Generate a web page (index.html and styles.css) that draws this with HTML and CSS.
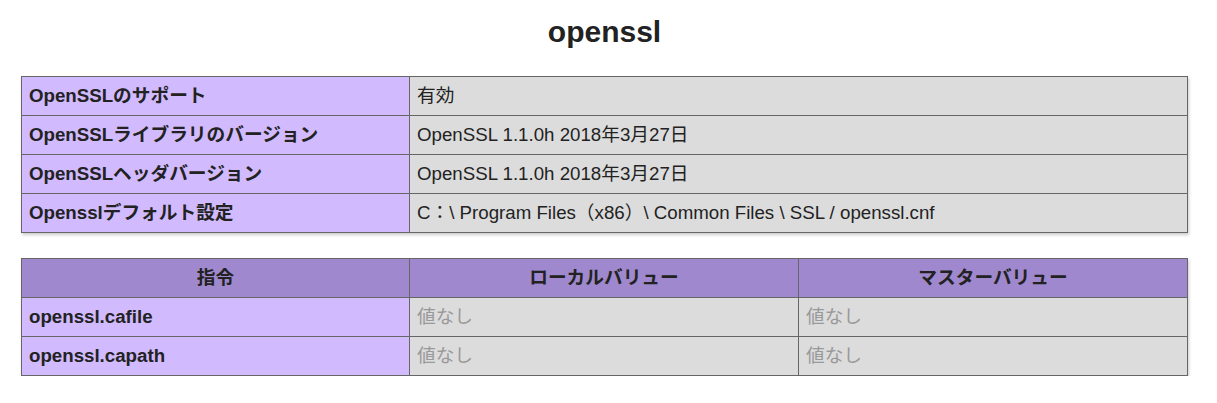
FILE: index.html
```html
<!DOCTYPE html>
<html lang="ja">
<head>
<meta charset="utf-8">
<title>openssl</title>
<link rel="stylesheet" href="styles.css">
</head>
<body>
<div class="page">
  <h1 class="title">openssl</h1>
  <table class="info">
    <colgroup><col class="c-key"><col></colgroup>
    <tr><td class="e">OpenSSLのサポート</td><td class="v">有効</td></tr>
    <tr><td class="e">OpenSSLライブラリのバージョン</td><td class="v">OpenSSL 1.1.0h 2018年3月27日</td></tr>
    <tr><td class="e">OpenSSLヘッダバージョン</td><td class="v">OpenSSL 1.1.0h 2018年3月27日</td></tr>
    <tr><td class="e">Opensslデフォルト設定</td><td class="v">C：\ Program Files（x86）\ Common Files \ SSL / openssl.cnf</td></tr>
  </table>
  <table class="info second">
    <colgroup><col class="c-key"><col class="c-mid"><col></colgroup>
    <tr class="h"><th>指令</th><th>ローカルバリュー</th><th>マスターバリュー</th></tr>
    <tr><td class="e">openssl.cafile</td><td class="v"><i class="no">値なし</i></td><td class="v"><i class="no">値なし</i></td></tr>
    <tr><td class="e">openssl.capath</td><td class="v"><i class="no">値なし</i></td><td class="v"><i class="no">値なし</i></td></tr>
  </table>
</div>
</body>
</html>
```
FILE: styles.css
```css
html, body {
  margin: 0;
  padding: 0;
  background: #fff;
}
body {
  font-family: "Liberation Sans", Arial, "Noto Sans CJK JP", sans-serif;
  color: #222;
}
.page {
  width: 1167px;
  margin-left: 21px;
}
.title {
  margin: 0 0 26px;
  padding-top: 14px;
  line-height: 36px;
  font-size: 30px;
  font-weight: bold;
  text-align: center;
  color: #222;
}
.info {
  width: 1167px;
  border-collapse: collapse;
  table-layout: fixed;
  box-shadow: 1px 2px 3px #ccc;
  font-size: 18.7px;
}
.second {
  margin-top: 25px;
}
.c-key { width: 388px; }
.c-mid { width: 389px; }
.info td, .info th {
  border: 1px solid #666;
  padding: 4px 7px;
  line-height: 30px;
  height: 30px;
  vertical-align: middle;
  text-align: left;
  white-space: nowrap;
  overflow: hidden;
}
.e {
  background: #d2baff;
  font-weight: bold;
  color: #222;
}
.v {
  background: #dcdcdc;
  color: #222;
}
.h th {
  background: #9f88ce;
  font-weight: bold;
  text-align: center;
  color: #222;
}
.no {
  font-style: normal;
  color: #999;
}
```
